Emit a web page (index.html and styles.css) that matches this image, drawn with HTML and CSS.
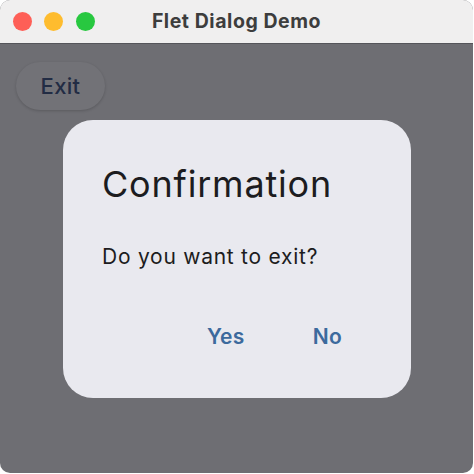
FILE: index.html
```html
<!DOCTYPE html>
<html>
<head>
<meta charset="utf-8">
<link rel="stylesheet" href="styles.css">
</head>
<body>
<div class="window">
  <div class="titlebar">
    <div class="lights">
      <span class="light red"></span>
      <span class="light yellow"></span>
      <span class="light green"></span>
    </div>
    <div class="title">Flet Dialog Demo</div>
  </div>
  <div class="content">
    <button class="exit-btn">Exit</button>
    <div class="dialog">
      <div class="dialog-title">Confirmation</div>
      <div class="dialog-body">Do you want to exit?</div>
      <div class="dialog-actions">
        <button class="text-btn">Yes</button>
        <button class="text-btn">No</button>
      </div>
    </div>
  </div>
</div>
</body>
</html>
```
FILE: styles.css
```css
html, body {
  margin: 0;
  padding: 0;
  background: #ffffff;
}
body {
  width: 474px;
  height: 474px;
  font-family: Inter, "Noto Sans", sans-serif;
}
.window {
  width: 473px;
  height: 473px;
  border-radius: 10px;
  overflow: hidden;
  display: flex;
  flex-direction: column;
  background: #6e6e73;
}
.titlebar {
  height: 43px;
  flex: 0 0 43px;
  background: #f0efef;
  border-bottom: 1px solid #55555a;
  position: relative;
  display: flex;
  align-items: center;
  justify-content: center;
}
.lights {
  position: absolute;
  left: 12.5px;
  top: 12px;
  display: flex;
  gap: 12.5px;
}
.light {
  width: 19px;
  height: 19px;
  border-radius: 50%;
  display: block;
}
.red { background: #fe5f57; }
.yellow { background: #febc2e; }
.green { background: #28c840; }
.title {
  font-size: 19.5px;
  font-weight: 700;
  letter-spacing: 0.55px;
  color: #3d3d3d;
  margin-top: -2px;
}
.content {
  flex: 1;
  position: relative;
  padding: 18px 16px;
}
.exit-btn {
  width: 89px;
  height: 48px;
  border-radius: 24px;
  border: none;
  background: #727277;
  box-shadow: 0 1px 3px rgba(0,0,0,0.18);
  font-family: Inter, "Noto Sans", sans-serif;
  font-size: 22px;
  font-weight: 500;
  letter-spacing: 0.3px;
  color: #222c44;
  padding: 0;
}
.dialog {
  position: absolute;
  left: 63px;
  top: 76px;
  width: 348px;
  height: 278px;
  box-sizing: border-box;
  background: #e9e9ef;
  border-radius: 30px;
  padding: 42px 39px 0 39px;
  display: flex;
  flex-direction: column;
}
.dialog-title {
  font-size: 36px;
  line-height: 44px;
  letter-spacing: 0.8px;
  color: #1c1c20;
  font-weight: 400;
}
.dialog-body {
  margin-top: 37px;
  font-size: 21px;
  line-height: 28px;
  letter-spacing: 0.75px;
  color: #1c1c20;
}
.dialog-actions {
  margin-top: 45px;
  display: flex;
  justify-content: flex-end;
  gap: 40px;
  padding-right: 16px;
}
.text-btn {
  border: none;
  background: transparent;
  font-family: Inter, "Noto Sans", sans-serif;
  font-size: 21px;
  font-weight: 600;
  letter-spacing: 0.3px;
  color: #3c6a9d;
  padding: 0 14px;
  height: 40px;
}
```
